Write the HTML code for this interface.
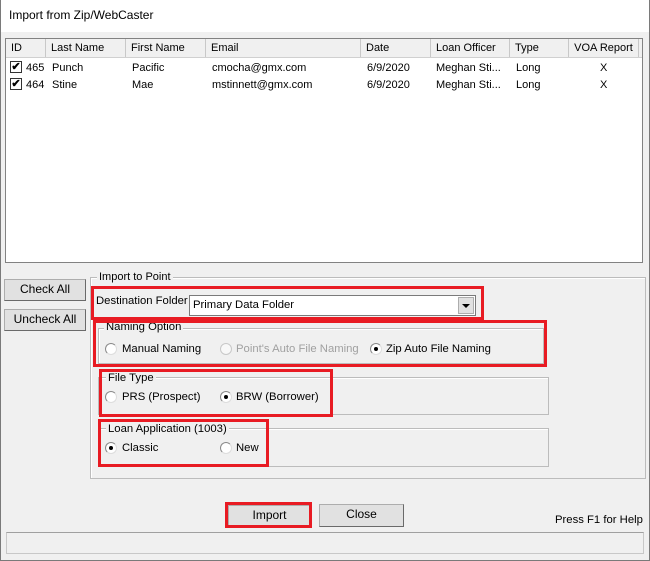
<!DOCTYPE html>
<html><head><style>
*{box-sizing:border-box;margin:0;padding:0}
body{width:650px;height:561px;background:#f0f0f0;font-family:"Liberation Sans",sans-serif;font-size:11px;color:#000;position:relative;overflow:hidden}
.a{position:absolute}
.t{position:absolute;white-space:nowrap;line-height:13px}
.grp{position:absolute;border:1px solid #bcbcbc;box-shadow:inset 1px 1px 0 #fff}
.lbl{position:absolute;background:#f0f0f0;padding:0 2px;white-space:nowrap;line-height:13px}
.red{position:absolute;border:3px solid #e81b23}
.btn{position:absolute;background:#e1e1e1;border:1px solid #adadad;border-right-color:#6a6a6a;border-bottom-color:#6a6a6a;text-align:center;line-height:19px;font-size:12px}
.rad{position:absolute;width:12px;height:12px;border-radius:50%;background:#fff;border:1px solid #8a8a8a;border-right-color:#ddd;border-bottom-color:#ddd}
.rad.on::after{content:"";position:absolute;left:3px;top:3px;width:4px;height:4px;border-radius:50%;background:#000}
.hd{position:absolute;top:0;height:18px;border-right:1px solid #c8c8c8;padding-left:5px;line-height:18px;font-size:11px}
.cb{position:absolute;width:12px;height:12px;border:1px solid #333;background:#fff;font-size:11px;line-height:10px;text-align:center;font-weight:bold}
.f{font-size:11.3px}
</style></head><body>
<div class="a" style="left:0;top:0;width:650px;height:32px;background:#fff"></div>
<div class="t" style="left:9px;top:9px;font-size:12px">Import from Zip/WebCaster</div>
<div class="a" style="left:0;top:0;width:650px;height:561px;border:1px solid #7a7a7a;border-top:none"></div>

<div class="a" style="left:5px;top:38px;width:638px;height:225px;background:#fff;border:1px solid #828282">
 <div class="a" style="left:0;top:0;width:636px;height:19px;background:#f0f0f0;border-bottom:1px solid #d0d0d0"></div>
 <div class="hd" style="left:0;width:40px">ID</div>
 <div class="hd" style="left:40px;width:80px">Last Name</div>
 <div class="hd" style="left:120px;width:80px">First Name</div>
 <div class="hd" style="left:200px;width:155px">Email</div>
 <div class="hd" style="left:355px;width:70px">Date</div>
 <div class="hd" style="left:425px;width:79px">Loan Officer</div>
 <div class="hd" style="left:504px;width:59px">Type</div>
 <div class="hd" style="left:563px;width:70px;text-align:center;padding:0">VOA Report</div>
</div>
<div class="cb" style="left:10px;top:61px">✔</div>
<div class="cb" style="left:10px;top:78px">✔</div>
<div class="t" style="left:26px;top:62px">465</div><div class="t" style="left:52px;top:62px">Punch</div><div class="t" style="left:132px;top:62px">Pacific</div><div class="t" style="left:212px;top:62px">cmocha@gmx.com</div><div class="t" style="left:367px;top:62px">6/9/2020</div><div class="t" style="left:436px;top:62px">Meghan Sti...</div><div class="t" style="left:516px;top:62px">Long</div><div class="t" style="left:600px;top:62px">X</div>
<div class="t" style="left:26px;top:79px">464</div><div class="t" style="left:52px;top:79px">Stine</div><div class="t" style="left:132px;top:79px">Mae</div><div class="t" style="left:212px;top:79px">mstinnett@gmx.com</div><div class="t" style="left:367px;top:79px">6/9/2020</div><div class="t" style="left:436px;top:79px">Meghan Sti...</div><div class="t" style="left:516px;top:79px">Long</div><div class="t" style="left:600px;top:79px">X</div>

<div class="btn" style="left:4px;top:279px;width:82px;height:22px">Check All</div>
<div class="btn" style="left:4px;top:309px;width:82px;height:22px">Uncheck All</div>

<div class="grp" style="left:90px;top:277px;width:556px;height:202px"></div>
<div class="lbl" style="left:97px;top:271px;font-size:11px">Import to Point</div>

<div class="t f" style="left:96px;top:295px">Destination Folder</div>
<div class="a" style="left:189px;top:295px;width:287px;height:21px;background:#fff;border:1px solid #7a7a7a"></div>
<div class="t f" style="left:193px;top:299px">Primary Data Folder</div>
<div class="a" style="left:458px;top:297px;width:16px;height:17px;background:#e1e1e1;border:1px solid #adadad"></div>
<div class="a" style="left:462px;top:304px;width:0;height:0;border-left:4px solid transparent;border-right:4px solid transparent;border-top:4px solid #000"></div>
<div class="red" style="left:91px;top:286px;width:393px;height:34px"></div>

<div class="grp" style="left:98px;top:328px;width:446px;height:36px"></div>
<div class="lbl f" style="left:104px;top:321px">Naming Option</div>
<div class="rad" style="left:105px;top:343px"></div><div class="t f" style="left:122px;top:343px">Manual Naming</div>
<div class="rad" style="left:220px;top:343px;border-color:#c8c8c8;background:#f8f8f8"></div><div class="t f" style="left:236px;top:343px;color:#a0a0a0">Point's Auto File Naming</div>
<div class="rad on" style="left:370px;top:343px"></div><div class="t f" style="left:386px;top:343px">Zip Auto File Naming</div>
<div class="red" style="left:93px;top:320px;width:454px;height:47px"></div>

<div class="grp" style="left:98px;top:377px;width:451px;height:38px"></div>
<div class="lbl f" style="left:106px;top:372px">File Type</div>
<div class="rad" style="left:105px;top:391px"></div><div class="t f" style="left:122px;top:391px">PRS (Prospect)</div>
<div class="rad on" style="left:220px;top:391px"></div><div class="t f" style="left:236px;top:391px">BRW (Borrower)</div>
<div class="red" style="left:99px;top:369px;width:234px;height:48px"></div>

<div class="grp" style="left:98px;top:428px;width:451px;height:39px"></div>
<div class="lbl f" style="left:106px;top:423px">Loan Application (1003)</div>
<div class="rad on" style="left:105px;top:442px"></div><div class="t f" style="left:122px;top:442px">Classic</div>
<div class="rad" style="left:220px;top:442px"></div><div class="t f" style="left:236px;top:442px">New</div>
<div class="red" style="left:98px;top:419px;width:171px;height:48px"></div>

<div class="btn" style="left:228px;top:505px;width:83px;height:21px">Import</div>
<div class="red" style="left:225px;top:502px;width:87px;height:26px"></div>
<div class="btn" style="left:319px;top:504px;width:85px;height:23px">Close</div>
<div class="t f" style="left:555px;top:514px">Press F1 for Help</div>

<div class="a" style="left:6px;top:532px;width:638px;height:22px;border:1px solid #c8c8c8;border-top-color:#a0a0a0"></div>
</body></html>
